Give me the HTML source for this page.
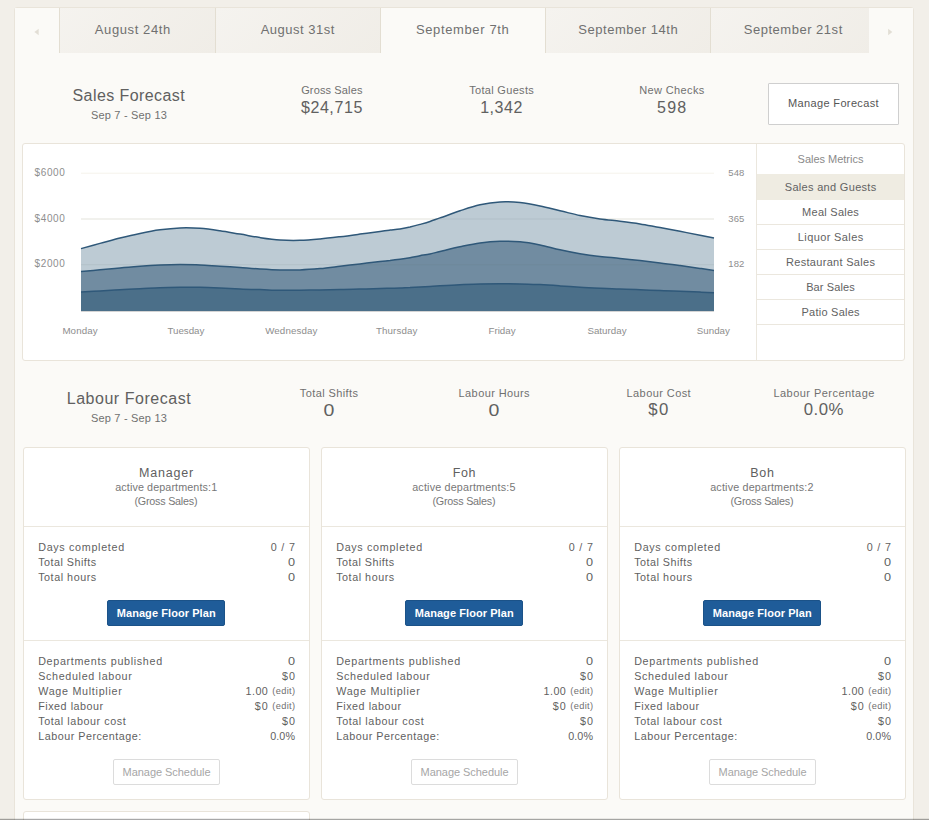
<!DOCTYPE html>
<html>
<head>
<meta charset="utf-8">
<title>Forecast</title>
<style>
*{box-sizing:border-box;margin:0;padding:0}
html,body{width:929px;height:820px;overflow:hidden}
body{background:#f2efe9;font-family:"Liberation Sans",sans-serif;color:#666;position:relative}
.abs{position:absolute}
.t{position:absolute;white-space:nowrap;text-align:center;transform:translateX(-50%);line-height:1}
.l{position:absolute;white-space:nowrap;line-height:1}
.r{position:absolute;white-space:nowrap;line-height:1;text-align:right;transform:translateX(-100%)}
#wrap{left:14px;top:7px;width:900px;height:830px;background:#fbfaf7;border:1px solid #e9e4da;border-radius:3px}
.tab{position:absolute;top:8px;height:45px;background:linear-gradient(135deg,#f5f3ef 0%,#f0ede7 100%);border-left:1px solid #e3ded2}
.box{position:absolute;background:#fff;border:1px solid #e9e4da;border-radius:3px}
.hl{position:absolute;height:1px;background:#ebe7de}
.btn{position:absolute;background:#1f5c99;border:1px solid #1b5288;border-radius:2px}
.gbtn{position:absolute;background:#fff;border:1px solid #dcdcdc;border-radius:2px}
</style>
</head>
<body>
<div id="wrap" class="abs"></div>
<div class="tab" style="left:50px;width:165px"></div>
<div class="tab" style="left:215px;width:165px"></div>
<div class="tab" style="left:380px;width:165px;background:#fbfaf7"></div>
<div class="tab" style="left:545px;width:165px"></div>
<div class="tab" style="left:710px;width:165px"></div>
<div class="abs" style="left:15px;top:8px;width:44px;height:46px;background:#fbfaf7"></div>
<div class="abs" style="left:869px;top:8px;width:44px;height:46px;background:#fbfaf7"></div>
<div class="abs" style="left:59px;top:8px;width:1px;height:45px;background:#e3ded2"></div>
<div class="t" style="left:132.5px;top:22.85px;font-size:13.0px;color:#707070;letter-spacing:0.60px;margin-left:0.30px;">August 24th</div>
<div class="t" style="left:297.5px;top:22.85px;font-size:13.0px;color:#707070;letter-spacing:0.49px;margin-left:0.24px;">August 31st</div>
<div class="t" style="left:462.3px;top:22.85px;font-size:13.0px;color:#707070;letter-spacing:0.63px;margin-left:0.32px;">September 7th</div>
<div class="t" style="left:628px;top:22.85px;font-size:13.0px;color:#707070;letter-spacing:0.54px;margin-left:0.27px;">September 14th</div>
<div class="t" style="left:793px;top:22.85px;font-size:13.0px;color:#707070;letter-spacing:0.52px;margin-left:0.26px;">September 21st</div>
<svg class="abs" style="left:34px;top:28px" width="6" height="8"><path d="M4.7 0.8 L0.4 4 L4.7 7.2Z" fill="#e2ded5"/></svg>
<svg class="abs" style="left:888px;top:28px" width="6" height="8"><path d="M0.1 0.8 L4.4 4 L0.1 7.2Z" fill="#e2ded5"/></svg>
<div class="t" style="left:128.6px;top:88.08px;font-size:16.0px;color:#606060;letter-spacing:0.42px;margin-left:0.21px;">Sales Forecast</div>
<div class="t" style="left:128.9px;top:109.83px;font-size:11.0px;color:#707070;letter-spacing:0.20px;margin-left:0.10px;">Sep 7 - Sep 13</div>
<div class="t" style="left:331.8px;top:85.23px;font-size:11.0px;color:#707070;letter-spacing:0.14px;margin-left:0.07px;">Gross Sales</div>
<div class="t" style="left:331.6px;top:100.08px;font-size:16.0px;color:#606060;letter-spacing:0.59px;margin-left:0.30px;">$24,715</div>
<div class="t" style="left:501.5px;top:85.23px;font-size:11.0px;color:#707070;letter-spacing:0.31px;margin-left:0.15px;">Total Guests</div>
<div class="t" style="left:501.3px;top:100.08px;font-size:16.0px;color:#606060;letter-spacing:0.55px;margin-left:0.28px;">1,342</div>
<div class="t" style="left:671.8px;top:85.23px;font-size:11.0px;color:#707070;letter-spacing:0.38px;margin-left:0.19px;">New Checks</div>
<div class="t" style="left:671.5999999999999px;top:100.08px;font-size:16.0px;color:#606060;letter-spacing:1.30px;margin-left:0.65px;">598</div>
<div class="abs" style="left:768px;top:83px;width:131px;height:42px;background:#fff;border:1px solid #cfcfcf;border-radius:1px"></div>
<div class="t" style="left:833.3px;top:98.43px;font-size:11.0px;color:#555;letter-spacing:0.36px;margin-left:0.18px;">Manage Forecast</div>
<div class="box" style="left:22px;top:143px;width:883px;height:218px"></div>
<div class="abs" style="left:756px;top:144px;width:1px;height:216px;background:#ebe7de"></div>
<div class="abs" style="left:757px;top:174px;width:147px;height:26px;background:#efece2"></div>
<div class="hl" style="left:757px;top:224px;width:147px"></div>
<div class="hl" style="left:757px;top:249px;width:147px"></div>
<div class="hl" style="left:757px;top:274px;width:147px"></div>
<div class="hl" style="left:757px;top:299px;width:147px"></div>
<div class="hl" style="left:757px;top:324px;width:147px"></div>
<div class="t" style="left:830.5px;top:153.83px;font-size:11.0px;color:#8a8a8a;letter-spacing:-0.02px;margin-left:-0.01px;">Sales Metrics</div>
<div class="t" style="left:830.5px;top:181.63px;font-size:11.0px;color:#626262;letter-spacing:0.31px;margin-left:0.16px;">Sales and Guests</div>
<div class="t" style="left:830.5px;top:206.63px;font-size:11.0px;color:#626262;letter-spacing:0.26px;margin-left:0.13px;">Meal Sales</div>
<div class="t" style="left:830.5px;top:231.63px;font-size:11.0px;color:#626262;letter-spacing:0.38px;margin-left:0.19px;">Liquor Sales</div>
<div class="t" style="left:830.5px;top:256.63px;font-size:11.0px;color:#626262;letter-spacing:0.30px;margin-left:0.15px;">Restaurant Sales</div>
<div class="t" style="left:830.5px;top:281.63px;font-size:11.0px;color:#626262;letter-spacing:0.12px;margin-left:0.06px;">Bar Sales</div>
<div class="t" style="left:830.5px;top:306.63px;font-size:11.0px;color:#626262;letter-spacing:0.25px;margin-left:0.13px;">Patio Sales</div>
<div class="l" style="left:34.6px;top:167.72px;font-size:10.0px;color:#8e8e8e;letter-spacing:0.58px;">$6000</div>
<div class="l" style="left:34.6px;top:213.52px;font-size:10.0px;color:#8e8e8e;letter-spacing:0.58px;">$4000</div>
<div class="l" style="left:34.6px;top:259.22px;font-size:10.0px;color:#8e8e8e;letter-spacing:0.58px;">$2000</div>
<div class="l" style="left:728.3px;top:168.16px;font-size:9.5px;color:#8e8e8e;letter-spacing:0.12px;">548</div>
<div class="l" style="left:728.3px;top:213.96px;font-size:9.5px;color:#8e8e8e;letter-spacing:0.12px;">365</div>
<div class="l" style="left:728.3px;top:259.06px;font-size:9.5px;color:#8e8e8e;letter-spacing:0.12px;">182</div>
<div class="t" style="left:80px;top:325.84px;font-size:9.75px;color:#8e8e8e;letter-spacing:0.10px;margin-left:0.05px;">Monday</div>
<div class="t" style="left:185.9px;top:325.84px;font-size:9.75px;color:#8e8e8e;letter-spacing:-0.03px;margin-left:-0.02px;">Tuesday</div>
<div class="t" style="left:291.3px;top:325.84px;font-size:9.75px;color:#8e8e8e;letter-spacing:0.11px;margin-left:0.05px;">Wednesday</div>
<div class="t" style="left:396.7px;top:325.84px;font-size:9.75px;color:#8e8e8e;letter-spacing:0.09px;margin-left:0.05px;">Thursday</div>
<div class="t" style="left:502px;top:325.84px;font-size:9.75px;color:#8e8e8e;">Friday</div>
<div class="t" style="left:607px;top:325.84px;font-size:9.75px;color:#8e8e8e;letter-spacing:0.03px;margin-left:0.02px;">Saturday</div>
<div class="t" style="left:713.4px;top:325.84px;font-size:9.75px;color:#8e8e8e;">Sunday</div>
<svg class="abs" style="left:0;top:0" width="929" height="400" viewBox="0 0 929 400"><rect x="81" y="172.7" width="633" height="1" fill="#f5f3ec"/><rect x="81" y="218.5" width="633" height="1" fill="#f5f3ec"/><rect x="81" y="264.2" width="633" height="1" fill="#f5f3ec"/><path d="M81.0,248.6C84.2,247.7,93.5,245.2,100.0,243.4C106.5,241.7,113.3,239.8,120.0,238.1C126.7,236.4,133.3,234.8,140.0,233.4C146.7,232.0,153.3,230.7,160.0,229.8C166.7,228.9,173.3,228.2,180.0,227.9C186.7,227.7,193.3,227.8,200.0,228.3C206.7,228.8,213.3,229.8,220.0,230.8C226.7,231.8,233.3,233.0,240.0,234.1C246.7,235.2,253.3,236.6,260.0,237.6C266.7,238.6,273.3,239.6,280.0,240.0C286.7,240.4,293.3,240.5,300.0,240.3C306.7,240.1,313.3,239.5,320.0,238.9C326.7,238.3,333.3,237.5,340.0,236.7C346.7,235.9,353.3,235.0,360.0,234.1C366.7,233.2,375.0,232.1,380.0,231.4C385.0,230.7,386.7,230.5,390.0,230.1C393.3,229.7,396.7,229.4,400.0,228.9C403.3,228.4,406.7,227.8,410.0,227.1C413.3,226.3,416.7,225.4,420.0,224.4C423.3,223.5,426.7,222.6,430.0,221.5C433.3,220.4,435.0,219.7,440.0,217.9C445.0,216.2,453.3,213.0,460.0,210.8C466.7,208.6,473.3,206.3,480.0,204.8C486.7,203.3,493.3,202.3,500.0,201.9C506.7,201.5,513.3,201.9,520.0,202.6C526.7,203.3,533.3,204.6,540.0,206.0C546.7,207.4,553.3,209.2,560.0,210.8C566.7,212.3,573.3,214.1,580.0,215.5C586.7,216.9,593.3,218.0,600.0,218.9C606.7,219.8,613.3,220.4,620.0,221.2C626.7,222.0,633.3,222.8,640.0,223.9C646.7,225.0,653.3,226.4,660.0,227.6C666.7,228.8,673.3,230.0,680.0,231.3C686.7,232.6,694.3,234.2,700.0,235.3C705.7,236.4,711.7,237.6,714.0,238.1L714.0,311.0L81.0,311.0Z" fill="#bdcbd4"/><path d="M81.0,248.6C84.2,247.7,93.5,245.2,100.0,243.4C106.5,241.7,113.3,239.8,120.0,238.1C126.7,236.4,133.3,234.8,140.0,233.4C146.7,232.0,153.3,230.7,160.0,229.8C166.7,228.9,173.3,228.2,180.0,227.9C186.7,227.7,193.3,227.8,200.0,228.3C206.7,228.8,213.3,229.8,220.0,230.8C226.7,231.8,233.3,233.0,240.0,234.1C246.7,235.2,253.3,236.6,260.0,237.6C266.7,238.6,273.3,239.6,280.0,240.0C286.7,240.4,293.3,240.5,300.0,240.3C306.7,240.1,313.3,239.5,320.0,238.9C326.7,238.3,333.3,237.5,340.0,236.7C346.7,235.9,353.3,235.0,360.0,234.1C366.7,233.2,375.0,232.1,380.0,231.4C385.0,230.7,386.7,230.5,390.0,230.1C393.3,229.7,396.7,229.4,400.0,228.9C403.3,228.4,406.7,227.8,410.0,227.1C413.3,226.3,416.7,225.4,420.0,224.4C423.3,223.5,426.7,222.6,430.0,221.5C433.3,220.4,435.0,219.7,440.0,217.9C445.0,216.2,453.3,213.0,460.0,210.8C466.7,208.6,473.3,206.3,480.0,204.8C486.7,203.3,493.3,202.3,500.0,201.9C506.7,201.5,513.3,201.9,520.0,202.6C526.7,203.3,533.3,204.6,540.0,206.0C546.7,207.4,553.3,209.2,560.0,210.8C566.7,212.3,573.3,214.1,580.0,215.5C586.7,216.9,593.3,218.0,600.0,218.9C606.7,219.8,613.3,220.4,620.0,221.2C626.7,222.0,633.3,222.8,640.0,223.9C646.7,225.0,653.3,226.4,660.0,227.6C666.7,228.8,673.3,230.0,680.0,231.3C686.7,232.6,694.3,234.2,700.0,235.3C705.7,236.4,711.7,237.6,714.0,238.1" fill="none" stroke="#2f5879" stroke-width="1.5"/><path d="M81.0,271.5C84.2,271.2,93.5,270.4,100.0,269.8C106.5,269.2,113.3,268.5,120.0,267.9C126.7,267.3,133.3,266.8,140.0,266.3C146.7,265.8,153.3,265.4,160.0,265.1C166.7,264.8,173.3,264.6,180.0,264.6C186.7,264.6,193.3,264.6,200.0,264.9C206.7,265.2,213.3,265.8,220.0,266.2C226.7,266.6,233.3,267.0,240.0,267.4C246.7,267.9,253.3,268.5,260.0,268.9C266.7,269.3,273.3,269.7,280.0,269.9C286.7,270.1,293.3,270.1,300.0,269.9C306.7,269.7,313.3,269.2,320.0,268.6C326.7,268.0,333.3,267.1,340.0,266.3C346.7,265.5,353.3,264.7,360.0,263.9C366.7,263.1,375.0,262.1,380.0,261.5C385.0,260.9,386.7,260.7,390.0,260.4C393.3,260.0,396.7,259.6,400.0,259.2C403.3,258.8,406.7,258.3,410.0,257.7C413.3,257.1,416.7,256.3,420.0,255.7C423.3,255.1,426.7,254.6,430.0,253.9C433.3,253.2,435.0,252.7,440.0,251.5C445.0,250.3,453.3,248.1,460.0,246.7C466.7,245.3,473.3,243.8,480.0,242.9C486.7,242.0,493.3,241.4,500.0,241.2C506.7,241.0,513.3,241.2,520.0,241.8C526.7,242.4,533.3,243.6,540.0,244.9C546.7,246.2,553.3,248.4,560.0,249.8C566.7,251.3,573.3,252.6,580.0,253.7C586.7,254.8,593.3,255.7,600.0,256.5C606.7,257.3,613.3,257.7,620.0,258.4C626.7,259.1,633.3,259.8,640.0,260.6C646.7,261.4,653.3,262.2,660.0,263.0C666.7,263.8,673.3,264.7,680.0,265.6C686.7,266.5,694.3,267.6,700.0,268.4C705.7,269.2,711.7,270.1,714.0,270.4L714.0,311.0L81.0,311.0Z" fill="#718ca1"/><path d="M81.0,271.5C84.2,271.2,93.5,270.4,100.0,269.8C106.5,269.2,113.3,268.5,120.0,267.9C126.7,267.3,133.3,266.8,140.0,266.3C146.7,265.8,153.3,265.4,160.0,265.1C166.7,264.8,173.3,264.6,180.0,264.6C186.7,264.6,193.3,264.6,200.0,264.9C206.7,265.2,213.3,265.8,220.0,266.2C226.7,266.6,233.3,267.0,240.0,267.4C246.7,267.9,253.3,268.5,260.0,268.9C266.7,269.3,273.3,269.7,280.0,269.9C286.7,270.1,293.3,270.1,300.0,269.9C306.7,269.7,313.3,269.2,320.0,268.6C326.7,268.0,333.3,267.1,340.0,266.3C346.7,265.5,353.3,264.7,360.0,263.9C366.7,263.1,375.0,262.1,380.0,261.5C385.0,260.9,386.7,260.7,390.0,260.4C393.3,260.0,396.7,259.6,400.0,259.2C403.3,258.8,406.7,258.3,410.0,257.7C413.3,257.1,416.7,256.3,420.0,255.7C423.3,255.1,426.7,254.6,430.0,253.9C433.3,253.2,435.0,252.7,440.0,251.5C445.0,250.3,453.3,248.1,460.0,246.7C466.7,245.3,473.3,243.8,480.0,242.9C486.7,242.0,493.3,241.4,500.0,241.2C506.7,241.0,513.3,241.2,520.0,241.8C526.7,242.4,533.3,243.6,540.0,244.9C546.7,246.2,553.3,248.4,560.0,249.8C566.7,251.3,573.3,252.6,580.0,253.7C586.7,254.8,593.3,255.7,600.0,256.5C606.7,257.3,613.3,257.7,620.0,258.4C626.7,259.1,633.3,259.8,640.0,260.6C646.7,261.4,653.3,262.2,660.0,263.0C666.7,263.8,673.3,264.7,680.0,265.6C686.7,266.5,694.3,267.6,700.0,268.4C705.7,269.2,711.7,270.1,714.0,270.4" fill="none" stroke="#2f5879" stroke-width="1.5"/><path d="M81.0,292.0C84.2,291.8,93.5,291.4,100.0,291.0C106.5,290.6,113.3,290.1,120.0,289.7C126.7,289.3,133.3,289.0,140.0,288.7C146.7,288.4,153.3,287.9,160.0,287.7C166.7,287.4,173.3,287.3,180.0,287.2C186.7,287.1,193.3,287.2,200.0,287.3C206.7,287.4,213.3,287.7,220.0,288.0C226.7,288.3,233.3,288.6,240.0,288.9C246.7,289.2,253.3,289.4,260.0,289.6C266.7,289.8,273.3,290.2,280.0,290.3C286.7,290.4,293.3,290.4,300.0,290.3C306.7,290.2,313.3,290.0,320.0,289.9C326.7,289.8,333.3,289.7,340.0,289.6C346.7,289.5,353.3,289.3,360.0,289.1C366.7,288.9,375.0,288.6,380.0,288.5C385.0,288.4,386.7,288.3,390.0,288.2C393.3,288.2,396.7,288.1,400.0,288.0C403.3,287.9,406.7,287.7,410.0,287.6C413.3,287.4,416.7,287.2,420.0,287.0C423.3,286.8,426.7,286.6,430.0,286.4C433.3,286.2,435.0,286.1,440.0,285.8C445.0,285.5,453.3,285.0,460.0,284.7C466.7,284.4,473.3,284.2,480.0,284.0C486.7,283.8,493.3,283.7,500.0,283.7C506.7,283.7,513.3,283.8,520.0,283.9C526.7,284.0,533.3,284.3,540.0,284.6C546.7,284.9,553.3,285.4,560.0,285.9C566.7,286.3,573.3,286.8,580.0,287.2C586.7,287.6,593.3,287.9,600.0,288.2C606.7,288.5,613.3,288.8,620.0,289.0C626.7,289.2,633.3,289.4,640.0,289.7C646.7,290.0,653.3,290.3,660.0,290.6C666.7,290.9,673.3,291.1,680.0,291.3C686.7,291.6,694.3,291.9,700.0,292.1C705.7,292.4,711.7,292.7,714.0,292.8L714.0,311.0L81.0,311.0Z" fill="#4b6f89"/><path d="M81.0,292.0C84.2,291.8,93.5,291.4,100.0,291.0C106.5,290.6,113.3,290.1,120.0,289.7C126.7,289.3,133.3,289.0,140.0,288.7C146.7,288.4,153.3,287.9,160.0,287.7C166.7,287.4,173.3,287.3,180.0,287.2C186.7,287.1,193.3,287.2,200.0,287.3C206.7,287.4,213.3,287.7,220.0,288.0C226.7,288.3,233.3,288.6,240.0,288.9C246.7,289.2,253.3,289.4,260.0,289.6C266.7,289.8,273.3,290.2,280.0,290.3C286.7,290.4,293.3,290.4,300.0,290.3C306.7,290.2,313.3,290.0,320.0,289.9C326.7,289.8,333.3,289.7,340.0,289.6C346.7,289.5,353.3,289.3,360.0,289.1C366.7,288.9,375.0,288.6,380.0,288.5C385.0,288.4,386.7,288.3,390.0,288.2C393.3,288.2,396.7,288.1,400.0,288.0C403.3,287.9,406.7,287.7,410.0,287.6C413.3,287.4,416.7,287.2,420.0,287.0C423.3,286.8,426.7,286.6,430.0,286.4C433.3,286.2,435.0,286.1,440.0,285.8C445.0,285.5,453.3,285.0,460.0,284.7C466.7,284.4,473.3,284.2,480.0,284.0C486.7,283.8,493.3,283.7,500.0,283.7C506.7,283.7,513.3,283.8,520.0,283.9C526.7,284.0,533.3,284.3,540.0,284.6C546.7,284.9,553.3,285.4,560.0,285.9C566.7,286.3,573.3,286.8,580.0,287.2C586.7,287.6,593.3,287.9,600.0,288.2C606.7,288.5,613.3,288.8,620.0,289.0C626.7,289.2,633.3,289.4,640.0,289.7C646.7,290.0,653.3,290.3,660.0,290.6C666.7,290.9,673.3,291.1,680.0,291.3C686.7,291.6,694.3,291.9,700.0,292.1C705.7,292.4,711.7,292.7,714.0,292.8" fill="none" stroke="#2f5879" stroke-width="1.5"/><rect x="81" y="218.5" width="633" height="1" fill="#5a6a70" fill-opacity="0.10"/><rect x="81" y="264.2" width="633" height="1" fill="#5a6a70" fill-opacity="0.10"/><rect x="81" y="311" width="633" height="1" fill="#c9c9c9" fill-opacity="0.8"/></svg>
<div class="t" style="left:128.7px;top:391.08px;font-size:16.0px;color:#606060;letter-spacing:0.53px;margin-left:0.26px;">Labour Forecast</div>
<div class="t" style="left:128.9px;top:412.93px;font-size:11.0px;color:#707070;letter-spacing:0.20px;margin-left:0.10px;">Sep 7 - Sep 13</div>
<div class="t" style="left:328.9px;top:387.53px;font-size:11.0px;color:#707070;letter-spacing:0.40px;margin-left:0.20px;">Total Shifts</div>
<div class="t" style="left:328.79999999999995px;top:402.58px;font-size:16.0px;color:#606060;transform:translateX(-50%) scaleX(1.22);">0</div>
<div class="t" style="left:494.1px;top:387.53px;font-size:11.0px;color:#707070;letter-spacing:0.39px;margin-left:0.19px;">Labour Hours</div>
<div class="t" style="left:494.0px;top:402.58px;font-size:16.0px;color:#606060;transform:translateX(-50%) scaleX(1.22);">0</div>
<div class="t" style="left:658.6px;top:387.53px;font-size:11.0px;color:#707070;letter-spacing:0.42px;margin-left:0.21px;">Labour Cost</div>
<div class="t" style="left:658.3000000000001px;top:402.32px;font-size:16.75px;color:#606060;letter-spacing:1.30px;margin-left:0.65px;">$0</div>
<div class="t" style="left:823.9px;top:387.53px;font-size:11.0px;color:#707070;letter-spacing:0.46px;margin-left:0.23px;">Labour Percentage</div>
<div class="t" style="left:823.6px;top:402.32px;font-size:16.75px;color:#606060;letter-spacing:0.56px;margin-left:0.28px;">0.0%</div>
<div class="box" style="left:23px;top:447px;width:287px;height:353px"></div>
<div class="hl" style="left:24px;top:526px;width:285px"></div>
<div class="hl" style="left:24px;top:640px;width:285px"></div>
<div class="t" style="left:166.1px;top:467.29px;font-size:12.5px;color:#606060;letter-spacing:0.79px;margin-left:0.40px;">Manager</div>
<div class="t" style="left:166.2px;top:482.35px;font-size:10.75px;color:#777;letter-spacing:0.11px;margin-left:0.05px;">active departments:1</div>
<div class="t" style="left:166px;top:495.75px;font-size:10.75px;color:#777;letter-spacing:-0.22px;margin-left:-0.11px;">(Gross Sales)</div>
<div class="l" style="left:38.2px;top:541.85px;font-size:10.75px;color:#5f5f5f;letter-spacing:0.68px;">Days completed</div>
<div class="r" style="left:295px;top:541.85px;font-size:10.75px;color:#5f5f5f;letter-spacing:0.86px;margin-left:0.86px;">0 / 7</div>
<div class="l" style="left:38.2px;top:556.85px;font-size:10.75px;color:#5f5f5f;letter-spacing:0.49px;">Total Shifts</div>
<div class="r" style="left:295px;top:556.85px;font-size:10.75px;color:#5f5f5f;transform-origin:100% 50%;transform:translateX(-100%) scaleX(1.18);">0</div>
<div class="l" style="left:38.2px;top:571.85px;font-size:10.75px;color:#5f5f5f;letter-spacing:0.54px;">Total hours</div>
<div class="r" style="left:295px;top:571.85px;font-size:10.75px;color:#5f5f5f;transform-origin:100% 50%;transform:translateX(-100%) scaleX(1.18);">0</div>
<div class="btn" style="left:107px;top:600px;width:118px;height:26px"></div>
<div class="t" style="left:166.2px;top:607.83px;font-size:11.0px;color:#fff;font-weight:bold;letter-spacing:0.07px;margin-left:0.04px;">Manage Floor Plan</div>
<div class="l" style="left:38.2px;top:655.95px;font-size:10.75px;color:#5f5f5f;letter-spacing:0.67px;">Departments published</div>
<div class="r" style="left:295px;top:655.95px;font-size:10.75px;color:#5f5f5f;transform-origin:100% 50%;transform:translateX(-100%) scaleX(1.18);">0</div>
<div class="l" style="left:38.2px;top:670.95px;font-size:10.75px;color:#5f5f5f;letter-spacing:0.66px;">Scheduled labour</div>
<div class="r" style="left:295px;top:670.95px;font-size:10.75px;color:#5f5f5f;letter-spacing:1.12px;margin-left:1.12px;">$0</div>
<div class="l" style="left:38.2px;top:685.95px;font-size:10.75px;color:#5f5f5f;letter-spacing:0.71px;">Wage Multiplier</div>
<div class="r" style="left:295px;top:687.18px;font-size:9.25px;color:#707070;letter-spacing:0.32px;margin-left:0.32px;">(edit)</div>
<div class="r" style="left:267.8px;top:685.95px;font-size:10.75px;color:#5f5f5f;letter-spacing:0.42px;margin-left:0.42px;">1.00</div>
<div class="l" style="left:38.2px;top:700.95px;font-size:10.75px;color:#5f5f5f;letter-spacing:0.53px;">Fixed labour</div>
<div class="r" style="left:295px;top:702.18px;font-size:9.25px;color:#707070;letter-spacing:0.32px;margin-left:0.32px;">(edit)</div>
<div class="r" style="left:267.8px;top:700.95px;font-size:10.75px;color:#5f5f5f;letter-spacing:1.12px;margin-left:1.12px;">$0</div>
<div class="l" style="left:38.2px;top:715.95px;font-size:10.75px;color:#5f5f5f;letter-spacing:0.58px;">Total labour cost</div>
<div class="r" style="left:295px;top:715.95px;font-size:10.75px;color:#5f5f5f;letter-spacing:1.12px;margin-left:1.12px;">$0</div>
<div class="l" style="left:38.2px;top:730.95px;font-size:10.75px;color:#5f5f5f;letter-spacing:0.51px;">Labour Percentage:</div>
<div class="r" style="left:295px;top:730.95px;font-size:10.75px;color:#5f5f5f;letter-spacing:0.07px;margin-left:0.07px;">0.0%</div>
<div class="gbtn" style="left:113px;top:759px;width:107px;height:26px"></div>
<div class="t" style="left:166.6px;top:766.83px;font-size:11.0px;color:#a6a6a6;letter-spacing:-0.05px;margin-left:-0.02px;">Manage Schedule</div>
<div class="box" style="left:321px;top:447px;width:287px;height:353px"></div>
<div class="hl" style="left:322px;top:526px;width:285px"></div>
<div class="hl" style="left:322px;top:640px;width:285px"></div>
<div class="t" style="left:464.1px;top:467.29px;font-size:12.5px;color:#606060;letter-spacing:0.65px;margin-left:0.33px;">Foh</div>
<div class="t" style="left:463.8px;top:482.35px;font-size:10.75px;color:#777;letter-spacing:0.18px;margin-left:0.09px;">active departments:5</div>
<div class="t" style="left:464px;top:495.75px;font-size:10.75px;color:#777;letter-spacing:-0.22px;margin-left:-0.11px;">(Gross Sales)</div>
<div class="l" style="left:336.2px;top:541.85px;font-size:10.75px;color:#5f5f5f;letter-spacing:0.68px;">Days completed</div>
<div class="r" style="left:593px;top:541.85px;font-size:10.75px;color:#5f5f5f;letter-spacing:0.86px;margin-left:0.86px;">0 / 7</div>
<div class="l" style="left:336.2px;top:556.85px;font-size:10.75px;color:#5f5f5f;letter-spacing:0.49px;">Total Shifts</div>
<div class="r" style="left:593px;top:556.85px;font-size:10.75px;color:#5f5f5f;transform-origin:100% 50%;transform:translateX(-100%) scaleX(1.18);">0</div>
<div class="l" style="left:336.2px;top:571.85px;font-size:10.75px;color:#5f5f5f;letter-spacing:0.54px;">Total hours</div>
<div class="r" style="left:593px;top:571.85px;font-size:10.75px;color:#5f5f5f;transform-origin:100% 50%;transform:translateX(-100%) scaleX(1.18);">0</div>
<div class="btn" style="left:405px;top:600px;width:118px;height:26px"></div>
<div class="t" style="left:464.2px;top:607.83px;font-size:11.0px;color:#fff;font-weight:bold;letter-spacing:0.07px;margin-left:0.04px;">Manage Floor Plan</div>
<div class="l" style="left:336.2px;top:655.95px;font-size:10.75px;color:#5f5f5f;letter-spacing:0.67px;">Departments published</div>
<div class="r" style="left:593px;top:655.95px;font-size:10.75px;color:#5f5f5f;transform-origin:100% 50%;transform:translateX(-100%) scaleX(1.18);">0</div>
<div class="l" style="left:336.2px;top:670.95px;font-size:10.75px;color:#5f5f5f;letter-spacing:0.66px;">Scheduled labour</div>
<div class="r" style="left:593px;top:670.95px;font-size:10.75px;color:#5f5f5f;letter-spacing:1.12px;margin-left:1.12px;">$0</div>
<div class="l" style="left:336.2px;top:685.95px;font-size:10.75px;color:#5f5f5f;letter-spacing:0.71px;">Wage Multiplier</div>
<div class="r" style="left:593px;top:687.18px;font-size:9.25px;color:#707070;letter-spacing:0.32px;margin-left:0.32px;">(edit)</div>
<div class="r" style="left:565.8px;top:685.95px;font-size:10.75px;color:#5f5f5f;letter-spacing:0.42px;margin-left:0.42px;">1.00</div>
<div class="l" style="left:336.2px;top:700.95px;font-size:10.75px;color:#5f5f5f;letter-spacing:0.53px;">Fixed labour</div>
<div class="r" style="left:593px;top:702.18px;font-size:9.25px;color:#707070;letter-spacing:0.32px;margin-left:0.32px;">(edit)</div>
<div class="r" style="left:565.8px;top:700.95px;font-size:10.75px;color:#5f5f5f;letter-spacing:1.12px;margin-left:1.12px;">$0</div>
<div class="l" style="left:336.2px;top:715.95px;font-size:10.75px;color:#5f5f5f;letter-spacing:0.58px;">Total labour cost</div>
<div class="r" style="left:593px;top:715.95px;font-size:10.75px;color:#5f5f5f;letter-spacing:1.12px;margin-left:1.12px;">$0</div>
<div class="l" style="left:336.2px;top:730.95px;font-size:10.75px;color:#5f5f5f;letter-spacing:0.51px;">Labour Percentage:</div>
<div class="r" style="left:593px;top:730.95px;font-size:10.75px;color:#5f5f5f;letter-spacing:0.07px;margin-left:0.07px;">0.0%</div>
<div class="gbtn" style="left:411px;top:759px;width:107px;height:26px"></div>
<div class="t" style="left:464.6px;top:766.83px;font-size:11.0px;color:#a6a6a6;letter-spacing:-0.05px;margin-left:-0.02px;">Manage Schedule</div>
<div class="box" style="left:619px;top:447px;width:287px;height:353px"></div>
<div class="hl" style="left:620px;top:526px;width:285px"></div>
<div class="hl" style="left:620px;top:640px;width:285px"></div>
<div class="t" style="left:762.1px;top:467.29px;font-size:12.5px;color:#606060;letter-spacing:0.75px;margin-left:0.38px;">Boh</div>
<div class="t" style="left:761.8000000000001px;top:482.35px;font-size:10.75px;color:#777;letter-spacing:0.18px;margin-left:0.09px;">active departments:2</div>
<div class="t" style="left:762px;top:495.75px;font-size:10.75px;color:#777;letter-spacing:-0.22px;margin-left:-0.11px;">(Gross Sales)</div>
<div class="l" style="left:634.2px;top:541.85px;font-size:10.75px;color:#5f5f5f;letter-spacing:0.68px;">Days completed</div>
<div class="r" style="left:891px;top:541.85px;font-size:10.75px;color:#5f5f5f;letter-spacing:0.86px;margin-left:0.86px;">0 / 7</div>
<div class="l" style="left:634.2px;top:556.85px;font-size:10.75px;color:#5f5f5f;letter-spacing:0.49px;">Total Shifts</div>
<div class="r" style="left:891px;top:556.85px;font-size:10.75px;color:#5f5f5f;transform-origin:100% 50%;transform:translateX(-100%) scaleX(1.18);">0</div>
<div class="l" style="left:634.2px;top:571.85px;font-size:10.75px;color:#5f5f5f;letter-spacing:0.54px;">Total hours</div>
<div class="r" style="left:891px;top:571.85px;font-size:10.75px;color:#5f5f5f;transform-origin:100% 50%;transform:translateX(-100%) scaleX(1.18);">0</div>
<div class="btn" style="left:703px;top:600px;width:118px;height:26px"></div>
<div class="t" style="left:762.2px;top:607.83px;font-size:11.0px;color:#fff;font-weight:bold;letter-spacing:0.07px;margin-left:0.04px;">Manage Floor Plan</div>
<div class="l" style="left:634.2px;top:655.95px;font-size:10.75px;color:#5f5f5f;letter-spacing:0.67px;">Departments published</div>
<div class="r" style="left:891px;top:655.95px;font-size:10.75px;color:#5f5f5f;transform-origin:100% 50%;transform:translateX(-100%) scaleX(1.18);">0</div>
<div class="l" style="left:634.2px;top:670.95px;font-size:10.75px;color:#5f5f5f;letter-spacing:0.66px;">Scheduled labour</div>
<div class="r" style="left:891px;top:670.95px;font-size:10.75px;color:#5f5f5f;letter-spacing:1.12px;margin-left:1.12px;">$0</div>
<div class="l" style="left:634.2px;top:685.95px;font-size:10.75px;color:#5f5f5f;letter-spacing:0.71px;">Wage Multiplier</div>
<div class="r" style="left:891px;top:687.18px;font-size:9.25px;color:#707070;letter-spacing:0.32px;margin-left:0.32px;">(edit)</div>
<div class="r" style="left:863.8px;top:685.95px;font-size:10.75px;color:#5f5f5f;letter-spacing:0.42px;margin-left:0.42px;">1.00</div>
<div class="l" style="left:634.2px;top:700.95px;font-size:10.75px;color:#5f5f5f;letter-spacing:0.53px;">Fixed labour</div>
<div class="r" style="left:891px;top:702.18px;font-size:9.25px;color:#707070;letter-spacing:0.32px;margin-left:0.32px;">(edit)</div>
<div class="r" style="left:863.8px;top:700.95px;font-size:10.75px;color:#5f5f5f;letter-spacing:1.12px;margin-left:1.12px;">$0</div>
<div class="l" style="left:634.2px;top:715.95px;font-size:10.75px;color:#5f5f5f;letter-spacing:0.58px;">Total labour cost</div>
<div class="r" style="left:891px;top:715.95px;font-size:10.75px;color:#5f5f5f;letter-spacing:1.12px;margin-left:1.12px;">$0</div>
<div class="l" style="left:634.2px;top:730.95px;font-size:10.75px;color:#5f5f5f;letter-spacing:0.51px;">Labour Percentage:</div>
<div class="r" style="left:891px;top:730.95px;font-size:10.75px;color:#5f5f5f;letter-spacing:0.07px;margin-left:0.07px;">0.0%</div>
<div class="gbtn" style="left:709px;top:759px;width:107px;height:26px"></div>
<div class="t" style="left:762.6px;top:766.83px;font-size:11.0px;color:#a6a6a6;letter-spacing:-0.05px;margin-left:-0.02px;">Manage Schedule</div>
<div class="box" style="left:23px;top:811px;width:287px;height:40px"></div>
<div class="abs" style="left:0;top:818px;width:929px;height:1px;background:rgba(0,0,0,0.07)"></div>
<div class="abs" style="left:0;top:819px;width:929px;height:1px;background:rgba(0,0,0,0.34)"></div>
</body>
</html>
